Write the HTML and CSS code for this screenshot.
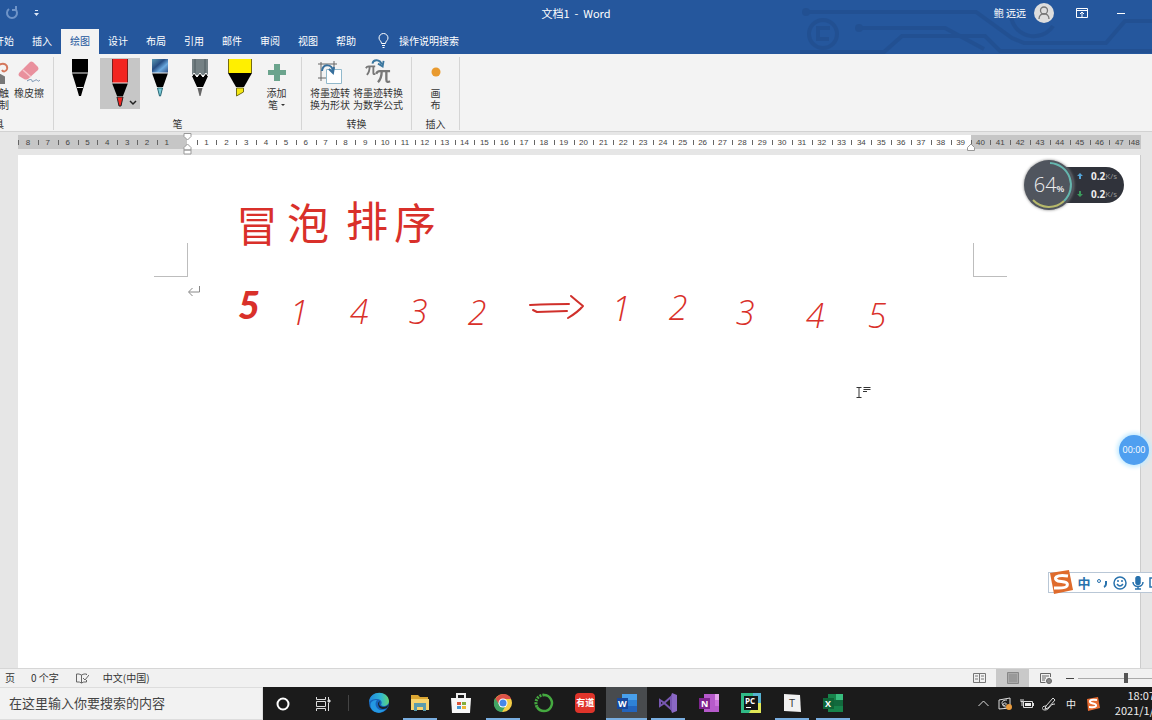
FILE: index.html
```html
<!DOCTYPE html>
<html lang="zh-CN">
<head>
<meta charset="utf-8">
<meta name="viewport" content="width=device-width, initial-scale=1">
<title>文档1 - Word</title>
<link rel="stylesheet" href="styles.css">
</head>
<body>
<header class="top">
  <svg class="circuit" width="390" height="54" viewBox="762 0 390 54" fill="none" stroke="#204b89" stroke-width="4" aria-hidden="true">
    <path d="M804 12H976L1012 38 1024 43H1106L1125 21H1152M858 28H945L984 49M800 52H884L902 36H985L1000 51H1152"/>
    <circle cx="823" cy="34" r="14"/><path d="M830 28h-12v11h11"/><path d="M1011 16a23 23 0 0 0 42 10"/><circle cx="806" cy="12" r="2"/><circle cx="859" cy="28" r="2"/>
  </svg>
  <div class="titlebar">
    <div class="quick">
      <button class="bare" aria-label="重复"><svg width="14" height="14" viewBox="0 0 14 14" fill="none" stroke="#6f94c8" stroke-width="2"><path d="M4 3a5 5 0 1 0 6 0M11 0v4H7"/></svg></button>
      <button class="bare" aria-label="自定义快速访问工具栏"><svg width="7" height="8" viewBox="0 0 7 8" fill="#dce6f5"><path d="M2 1h3v1H2zM1 4h5L3.500 7z"/></svg></button>
    </div>
    <h1 class="title">文档1&nbsp; -&nbsp; Word</h1>
    <div class="account">
      <span>鲍 远远</span>
      <svg class="avatar" width="20" height="20" viewBox="0 0 20 20" fill="none" stroke="#777" stroke-width="1.300"><circle cx="10" cy="10" r="10" fill="#dedede" stroke="none"/><circle cx="10" cy="7.500" r="3.500"/><path d="M5 16c0-7 10-7 10 0"/></svg>
      <button class="bare" aria-label="功能区显示选项"><svg width="12" height="10" viewBox="0 0 12 10" fill="none" stroke="#fff"><path d="M.5.500h11v9H.5zM.5 2.500h11M6 9V4M4 6l2-2 2 2"/></svg></button>
      <button class="bare minimise" aria-label="最小化"><svg width="10" height="10" viewBox="0 0 10 10" stroke="#fff"><path d="M1 5.500h8"/></svg></button>
    </div>
  </div>
  <nav class="tabs">
    <button>开始</button><button>插入</button><button class="active">绘图</button><button>设计</button><button>布局</button><button>引用</button><button>邮件</button><button>审阅</button><button>视图</button><button>帮助</button>
    <button class="tell"><svg width="11" height="15" viewBox="0 0 11 15" fill="none" stroke="#fff"><path d="M3.500 10.500C3.500 8 1 7.500 1 5a4.500 4.500 0 0 1 9 0c0 2.500-2.500 3-2.500 5.500zM4 12.500h3M4.500 14.500h2"/></svg>操作说明搜索</button>
  </nav>
</header>

<section class="ribbon" aria-label="绘图">
  <div class="group tools">
    <div class="items">
      <button class="tool touch"><svg width="22" height="26" viewBox="0 0 22 26" fill="none" stroke-width="2"><path d="M12 6c5-3 9 0 8 4-1 3-4 3-5 1" stroke="#d4775c"/><path d="M13 16l4 2v6h-4z" fill="#777" stroke="#777"/></svg><span>触<br>制</span></button>
      <button class="tool"><svg width="26" height="26" viewBox="0 0 26 26"><path d="M3 14 14 3q1-1 3 0l5 5q1 2 0 3L12 20q-2 1-4 0l-5-3q-1-1 0-3z" fill="#e9909d"/><path d="M7 11l8 7" stroke="#f7c4cb" stroke-width="1.500"/><path d="M11 22c3-2 5-2 5 0s4-2 5-1 1 2 3 0" fill="none" stroke="#708eae"/></svg><span>橡皮擦</span></button>
    </div>
    <span class="caption">具</span>
  </div>
  <div class="group pens">
    <div class="items">
      <button class="pen" aria-label="黑色笔"><svg width="40" height="51" viewBox="0 0 40 51"><path d="M12 1h16v14l-5 16-2 7h-2l-2-7-5-16z"/><path d="M12 15h16M17 29.500h6" stroke="#e8e8e8"/></svg></button>
      <button class="pen selected" aria-label="红色笔"><svg width="40" height="51" viewBox="0 0 40 51"><path d="M12 1h16v24H12z" fill="#f32420"/><path d="M12.500 1v24M27.500 1v24" stroke="#7d1d1d"/><path d="M12 25h16l-5 13h-6z"/><path d="M17 39h6l-2 9h-2z" fill="#f32420" stroke="#222"/><path d="M12 25h16" stroke="#eee"/><path d="m30 43 3 3 3-3" fill="none" stroke="#222" stroke-width="1.500"/></svg></button>
      <button class="pen" aria-label="银河笔"><svg width="40" height="51" viewBox="0 0 40 51"><defs><linearGradient id="galaxy" x2="1" y2="1"><stop stop-color="#5b9ab4"/><stop offset=".4" stop-color="#254c82"/><stop offset=".65" stop-color="#6aa9df"/><stop offset="1" stop-color="#314d80"/></linearGradient></defs><path d="M12 1h16v14H12z" fill="url(#galaxy)"/><path d="M12 15h16l-5 14h-6z"/><path d="M12 15h16" stroke="#eee"/><path d="M17.500 30h5l-2 8h-1z" fill="#7acbd8" stroke="#286674"/></svg></button>
      <button class="pen" aria-label="铅笔"><svg width="40" height="51" viewBox="0 0 40 51"><path d="M12 1h16v16H12z" fill="#758184"/><path d="M15 1v14M25 1v14" stroke="#515c60"/><path d="m12 18 2-3 3 4 3-4 3 4 3-4 2 3-5 11h-6z"/><path d="m12 18 2-3 3 4 3-4 3 4 3-4 2 3" fill="none" stroke="#fff"/><path d="M17.500 30h5l-2 8h-1z" fill="#666"/></svg></button>
      <button class="pen" aria-label="荧光笔"><svg width="40" height="51" viewBox="0 0 40 51"><path d="M8 1h24v14H8z" fill="#ffef00"/><path d="M8.500 1v14M31.500 1v14" stroke="#766d10"/><path d="M8 15h24L24 29h-8z"/><path d="M16.500 30h7v4l-7 4z" fill="#f4e611" stroke="#716d18"/></svg></button>
      <button class="tool add"><svg width="26" height="26" viewBox="0 0 26 26"><path d="M10 5h6v6h6v5h-6v6h-6v-6H4v-5h6z" fill="#6ba48d"/></svg><span>添加<br>笔<svg class="caret" width="4" height="3" viewBox="0 0 4 3"><path d="M0 0h4L2 2z" fill="#333"/></svg></span></button>
    </div>
    <span class="caption">笔</span>
  </div>
  <div class="group convert">
    <div class="items">
      <button class="tool"><svg width="26" height="26" viewBox="0 0 26 26" fill="none"><path d="M4 3v19M1 5h19M17 2v8M1 19h8" stroke="#666"/><path d="M9.500 10.500h15v14h-15z" fill="#fff" stroke="#91b9cc"/><path d="M5 12c1-8 10-7 11 0M12 10l4 4 1-6" stroke="#376f9c" stroke-width="2"/></svg><span>将墨迹转<br>换为形状</span></button>
      <button class="tool"><svg width="28" height="28" viewBox="0 0 28 28" fill="none" stroke="#777" stroke-width="2"><path d="M1 10q1-2 3-2h7M5 8q0 6-3 9M9 8v7q0 2 2 1"/><path d="M12 16q1-3 4-3h11M18 13q0 8-4 12M23 13v9q0 4 4 2" stroke-width="2.500"/><path d="M8 5c1-5 8-5 10 1M14 5l5 3 1-6" stroke="#3b779f"/></svg><span>将墨迹转换<br>为数学公式</span></button>
    </div>
    <span class="caption">转换</span>
  </div>
  <div class="group insert">
    <div class="items"><button class="tool"><svg width="26" height="26" viewBox="0 0 26 26"><circle cx="13" cy="13" r="4.500" fill="#e99a2e"/></svg><span>画<br>布</span></button></div>
    <span class="caption">插入</span>
  </div>
</section>

<main class="workspace">
  <div class="ruler" aria-label="标尺">
    <i class="out">8</i><i class="out">7</i><i class="out">6</i><i class="out">5</i><i class="out">4</i><i class="out">3</i><i class="out">2</i><i class="out">1</i><i class="zero"><svg class="indent" width="9" height="22" viewBox="0 0 9 22" fill="#fff" stroke="#999"><path d="M1 .5h7v3L4.500 7 1 3.500zM4.500 11 8 14.500V17H1v-2.500zM1 17h7v4H1z"/></svg></i><i>1</i><i>2</i><i>3</i><i>4</i><i>5</i><i>6</i><i>7</i><i>8</i><i>9</i><i>10</i><i>11</i><i>12</i><i>13</i><i>14</i><i>15</i><i>16</i><i>17</i><i>18</i><i>19</i><i>20</i><i>21</i><i>22</i><i>23</i><i>24</i><i>25</i><i>26</i><i>27</i><i>28</i><i>29</i><i>30</i><i>31</i><i>32</i><i>33</i><i>34</i><i>35</i><i>36</i><i>37</i><i>38</i><i>39</i><i class="out first">40<svg class="right-indent" width="8" height="8" viewBox="0 0 8 8" fill="#fff" stroke="#999"><path d="M4 1 7.500 4.500v3h-7v-3z"/></svg></i><i class="out">41</i><i class="out">42</i><i class="out">43</i><i class="out">44</i><i class="out">45</i><i class="out">46</i><i class="out">47</i><i class="out last">48</i>
  </div>
  <article class="page">
    <svg class="sheet" viewBox="18 155 1122 513" fill="none">
      <path d="M187.500 243v34M154 276.500h34M973.500 243v34M973 276.500h34" stroke="#bdbdbd"/>
      <path d="M199.500 286v6H189M192.500 288l-4 4 4 4" stroke="#888"/>
      <g class="ink heading"><text x="236" y="242">冒</text><text x="287" y="239">泡</text><text x="346" y="237">排</text><text x="394" y="239">序</text></g>
      <g class="ink number">
        <text class="heavy" x="249" y="319">5</text><text x="299" y="325">1</text><text x="359" y="324">4</text><text x="418" y="324">3</text><text x="477" y="325">2</text>
        <text x="621" y="321">1</text><text x="678" y="320">2</text><text x="745" y="325">3</text><text x="815" y="328">4</text><text x="877" y="328">5</text>
      </g>
      <path d="M530 305q22-1 39-1M533 310l4 2 30-1M571 296q7 6 12 10-5 6-15 12" stroke="#d0302b" stroke-width="2" stroke-linecap="round" stroke-linejoin="round"/>
      <path d="M856.500 387.500h5M856.500 397.500h5M859 388v9M863.500 387.500h7M863.500 389.500h7M863 391.500h4" stroke="#333"/>
    </svg>
  </article>
</main>

<footer class="status">
  <span>页</span><span class="words">0 个字</span>
  <svg width="13" height="11" viewBox="0 0 13 11" fill="none" stroke="#666"><path d="M5.500 2Q3 .500.500 1v8q3-.5 5 1zM5.500 2Q8 .500 10.500 1v1M5.500 10q2-1.500 5-1V7M7 5l2 2 4-5"/></svg>
  <span class="language">中文(中国)</span>
  <div class="views">
    <button class="view" aria-label="阅读视图"><svg width="13" height="10" viewBox="0 0 13 10" fill="none" stroke="#777"><path d="M.5.500h12v9H.5zM6.500 0v10M2 3h3M2 6h3M8 3h3M8 6h3"/></svg></button>
    <button class="view on" aria-label="页面视图"><svg width="12" height="12" viewBox="0 0 12 12" fill="#aaa" stroke="#888"><path d="M.5.500h11v11H.5zM2 3h8M2 5h8M2 7h8M2 9h8"/></svg></button>
    <button class="view" aria-label="Web 版式视图"><svg width="12" height="11" viewBox="0 0 12 11" fill="none" stroke="#666"><path d="M10.500 4V.500H.5v9h5M2 3h7M2 5h4M2 7h3"/><circle cx="9" cy="8" r="2.500" fill="#888"/></svg></button>
  </div>
  <button class="bare minus" aria-label="缩小"><svg width="8" height="8" viewBox="0 0 8 8" stroke="#444"><path d="M0 4.500h8"/></svg></button>
  <input class="zoom" type="range" aria-label="显示比例" value="50">
</footer>

<div class="taskbar">
  <input class="search" type="text" aria-label="搜索" placeholder="在这里输入你要搜索的内容">
  <button class="sys" aria-label="Cortana"><svg width="14" height="14" viewBox="0 0 14 14" fill="none" stroke="#fff" stroke-width="2"><circle cx="7" cy="7" r="5.500"/></svg></button>
  <button class="sys" aria-label="任务视图"><svg width="15" height="14" viewBox="0 0 15 14" fill="none" stroke="#ddd"><path d="M.5 0v2.500h9V0M.5 4.500h9v5H.5zM.5 14v-2.500h9V14M12.500 0v3M12.500 6v8"/><path d="M12 3h2v2h-2z" fill="#ddd"/></svg></button>
  <span class="rule"></span>
  <nav class="apps" aria-label="应用">
    <button aria-label="Edge"><svg width="22" height="22" viewBox="0 0 22 22"><defs><linearGradient id="sea" x2="1"><stop stop-color="#2085dd"/><stop offset=".6" stop-color="#30b7d2"/><stop offset="1" stop-color="#62d572"/></linearGradient></defs><circle cx="11" cy="11" r="10" fill="#1763ba"/><path d="M1 10C2-2 20-2 21 9c0 5-6 6-8 4 2-4-1-6-4-6-4 0-7 1-8 4z" fill="url(#sea)"/><path d="M9 8c-4 5 1 13 9 9-5 6-13 4-15-1-2-6 2-8 6-8z" fill="#2498e2"/><path d="M12 9q-3 5 3 6 4 0 6-3l-2 4q-8 3-9-4 0-2 2-3z" fill="#19212a"/></svg></button>
    <button class="open" aria-label="文件资源管理器"><svg width="20" height="18" viewBox="0 0 20 18"><path d="M1 1h7l2 2h8v4H1z" fill="#dca632"/><path d="M1 5h18v11H1z" fill="#f6d46e"/><path d="M4 9h12v8h-3v-4H7v4H4z" fill="#5a9cac"/></svg></button>
    <button aria-label="Microsoft Store"><svg width="20" height="20" viewBox="0 0 20 20"><path d="M6 6V1h8v5" fill="none" stroke="#eee" stroke-width="2"/><path d="M0 5h20l-1 15H1z" fill="#f7f7f7"/><path d="M6 9h4v3H6z" fill="#dc5437"/><path d="M11 9h4v3h-4z" fill="#84ad3a"/><path d="M6 13h4v3H6z" fill="#4699d4"/><path d="M11 13h4v3h-4z" fill="#eeb737"/></svg></button>
    <button class="open" aria-label="Chrome"><svg width="20" height="20" viewBox="0 0 20 20"><circle cx="10" cy="10" r="9" fill="#f4cd46"/><path d="M10 10H1L3 5C8-2 17 1 18 6h-8z" fill="#dc5248"/><path d="M2 5l5 8 5 1-3 5C2 19-1 11 2 5z" fill="#41a564"/><circle cx="10" cy="10" r="4.500" fill="#fff"/><circle cx="10" cy="10" r="3.500" fill="#4687e8"/></svg></button>
    <button aria-label="Anaconda"><svg width="20" height="20" viewBox="0 0 20 20" fill="none" stroke="#45a940"><path d="M10 2a8 8 0 1 1-7 12" stroke-width="2.500"/><path d="M3 14a8 8 0 0 1 7-12" stroke-width="3" stroke-dasharray="2 1"/></svg></button>
    <button aria-label="有道"><span class="youdao">有道</span></button>
    <button class="open current" aria-label="Word"><svg width="20" height="20" viewBox="0 0 20 20"><path d="M5 1h15v18H5z" fill="#2364bd"/><path d="M5 1h15v6H5z" fill="#48a0ec"/><path d="M5 7h15v6H5z" fill="#2e82d7"/><path d="M0 5h11v11H0z" fill="#17489d"/><text x="1" y="14">W</text></svg></button>
    <button class="open" aria-label="Visual Studio"><svg width="20" height="20" viewBox="0 0 20 20"><path d="m14 0 5 2v16l-5 2-1-3V3z" fill="#8a68c4"/><path d="M2 7v6l3-2 8-7v12l-8-7z" fill="none" stroke="#7857b2" stroke-width="2"/></svg></button>
    <button aria-label="OneNote"><svg width="20" height="20" viewBox="0 0 20 20"><path d="M5 1h15v18H5z" fill="#b65acb"/><path d="M16 1h4v6h-4z" fill="#e4a3ec"/><path d="M16 7h4v6h-4z" fill="#cb73dc"/><path d="M0 5h11v11H0z" fill="#7f258f"/><text x="2" y="14">N</text></svg></button>
    <button aria-label="PyCharm"><svg width="20" height="20" viewBox="0 0 20 20"><path d="M0 0h14l6 5v15H0z" fill="#30ba86"/><path d="M12 0h8v13H12z" fill="#56b2d1"/><path d="M14 10h6v10H8z" fill="#e1e857"/><path d="M3 3h14v14H3z" fill="#151515"/><path d="M5 14.500h5" stroke="#fff"/><text class="small" x="4" y="11">PC</text></svg></button>
    <button class="open" aria-label="Typora"><svg width="20" height="20" viewBox="0 0 20 20"><path d="m2 1 16 1 1 17-17-1z" fill="#f1f1f1"/><text class="dark" x="7" y="14">T</text></svg></button>
    <button class="open" aria-label="Excel"><svg width="20" height="20" viewBox="0 0 20 20"><path d="M5 1h15v18H5z" fill="#17834b"/><path d="M13 1h7v6h-7z" fill="#38bd7e"/><path d="M5 7h15v6H5z" fill="#12693d"/><path d="M0 5h11v11H0z" fill="#0f6537"/><text x="2" y="14">X</text></svg></button>
  </nav>
  <div class="tray">
    <button aria-label="显示隐藏的图标"><svg width="11" height="7" viewBox="0 0 11 7" fill="none" stroke="#ddd"><path d="m.5 6 5-5 5 5"/></svg></button>
    <button aria-label="同步"><svg width="15" height="14" viewBox="0 0 15 14" fill="none" stroke="#ddd"><path d="m1 3 11-2v10L1 12zM9 3C4 3 3 6 5 8s5-2 2-2-3 4 1 4"/><circle cx="11" cy="10" r="3" fill="#e99b3d" stroke="none"/></svg></button>
    <button aria-label="电池"><svg width="14" height="10" viewBox="0 0 14 10" fill="none" stroke="#ddd"><path d="M3.500 2.500h9v6h-9z"/><path d="M5 4h6v3H5z" fill="#eee" stroke="none"/><path d="M13.500 4v3M.5 2.500h3M1 0v2M3 0v2M2 3v4"/></svg></button>
    <button aria-label="触控笔"><svg width="14" height="14" viewBox="0 0 14 14" fill="none" stroke="#ddd"><path d="M4 9 11 1l2 2-7 8-3 1zM4 9c-5 0-5 4-1 4 5 0 4-6 10-6"/></svg></button>
    <button>中</button>
    <button aria-label="搜狗输入法"><svg width="14" height="14" viewBox="0 0 14 14"><path d="m1 2 11-2 2 11-12 3z" fill="#e66c32"/><path d="M11 3Q3 2 4 5c1 2 7 1 6 4-1 2-4 1-7 1" fill="none" stroke="#fff" stroke-width="2"/></svg></button>
    <div class="clock"><time>18:07</time><span>2021/1/</span></div>
  </div>
</div>

<aside class="meter">
  <div class="dial"><svg class="arc" width="50" height="50" viewBox="0 0 50 50" fill="none" stroke-width="2"><path d="M26 3a22 22 0 0 1 14 38" stroke="#65b6ae"/><path d="M40 41a22 22 0 0 1-31-1" stroke="#b7b96b"/></svg><b>64<small>%</small></b></div>
  <div class="rates"><span><svg width="6" height="6" viewBox="0 0 6 6" fill="#54a5d8"><path d="M3 0l3 3H4v3H2V3H0z"/></svg><b>0.2</b><small>K/s</small></span><span><svg width="6" height="6" viewBox="0 0 6 6" fill="#3b9a5c"><path d="M3 6 0 3h2V0h2v3h2z"/></svg><b>0.2</b><small>K/s</small></span></div>
</aside>
<div class="timer">00:00</div>
<aside class="ime">
  <svg class="sogou" width="25" height="25" viewBox="0 0 25 25"><path d="m1 3 19-3 4 20-19 4z" fill="#df6b2c"/><path d="M19 6C6 4 4 9 9 11c4 1 11 0 9 5-2 3-8 2-13 2" fill="none" stroke="#fff" stroke-width="3"/></svg>
  <button>中</button>
  <button aria-label="标点"><svg width="12" height="12" viewBox="0 0 12 12" fill="none" stroke="#2872ad"><circle cx="3" cy="4" r="1.500"/><path d="M9 5h1v2q0 2-2 3" stroke-width="2"/></svg></button>
  <button aria-label="表情"><svg width="14" height="14" viewBox="0 0 14 14" fill="none" stroke="#2872ad" stroke-width="1.500"><circle cx="7" cy="7" r="6"/><path d="M5 4v2M9 4v2M4 8q3 4 6 0"/></svg></button>
  <button aria-label="语音"><svg width="12" height="14" viewBox="0 0 12 14" fill="none" stroke="#2872ad" stroke-width="1.500"><path d="M4 2q2-3 4 0v5q-2 3-4 0z" fill="#2872ad"/><path d="M1 6c0 6 10 6 10 0M6 10v3M3 13h6"/></svg></button>
  <button aria-label="键盘"><svg width="14" height="11" viewBox="0 0 14 11" fill="none" stroke="#2872ad" stroke-width="1.500"><path d="M1 1h12v9H1zM3 4h8M3 7h8"/></svg></button>
</aside>
</body>
</html>
```
FILE: styles.css
```css
* { box-sizing: border-box; }
body {
  margin: 0;
  height: 100vh;
  display: flex;
  flex-direction: column;
  overflow: hidden;
  position: relative;
  background: #e6e6e6;
  color: #333;
  font: 10px/12px "Noto Sans CJK SC", sans-serif;
}
button {
  display: flex;
  align-items: center;
  justify-content: center;
  margin: 0;
  padding: 0;
  border: 0;
  background: none;
  color: inherit;
  font: inherit;
}
svg { display: block; flex-shrink: 0; }

/* Title bar and tabs */
.top { position: relative; flex: none; background: #25579d; color: #fff; }
.circuit { position: absolute; top: 0; right: 0; opacity: .5; }
.titlebar {
  position: relative;
  display: grid;
  grid-template-columns: 1fr auto 1fr;
  align-items: center;
  height: 26px;
}
.quick { display: flex; align-items: center; gap: 14px; padding-left: 5px; }
.title { margin: 0; font-size: 11px; line-height: 16px; font-weight: 400; }
.account { display: flex; align-items: center; justify-content: flex-end; padding-right: 26px; }
.avatar { margin: 0 22px 0 8px; }
.minimise { margin-left: 28px; }
.tabs { position: relative; display: flex; height: 28px; margin-left: -15px; padding-top: 3px; }
.tabs button { width: 38px; padding-bottom: 2px; white-space: nowrap; }
.tabs .active { background: #f3f3f3; color: #25579d; }
.tabs .tell { width: auto; gap: 10px; margin-left: 13px; }

/* Ribbon */
.ribbon {
  display: flex;
  flex: none;
  height: 78px;
  padding: 3px 0 1px;
  background: #f3f3f3;
  border-bottom: 1px solid #d2d2d2;
}
.group {
  display: flex;
  flex-direction: column;
  align-items: center;
  justify-content: space-between;
  border-right: 1px solid #d5d5d5;
}
.items { display: flex; align-items: flex-start; }
.tool { flex-direction: column; gap: 2px; padding-top: 2px; line-height: 12px; white-space: nowrap; }
.tools { width: 69px; margin-left: -15px; align-items: flex-start; }
.tools .items { gap: 5px; }
.touch { width: 24px; align-items: flex-end; }
.tools .caption { padding-left: 9px; }
.pens { width: 248px; }
.pens .items { margin-right: 2px; }
.pen { width: 40px; height: 51px; margin-top: 1px; }
.selected { background: #c6c6c6; }
.add { width: 34px; }
.caret { display: inline-block; margin: 0 0 2px 3px; }
.convert { width: 110px; }
.convert .items { gap: 3px; }
.convert .tool svg { height: 26px; }
.insert { width: 48px; }

/* Ruler and page */
.workspace { flex: 1; min-height: 0; display: flex; flex-direction: column; padding: 3px 11px 0 18px; }
.ruler { display: flex; flex: none; height: 14px; margin-bottom: 6px; background: #fff; }
.ruler i {
  position: relative;
  flex: 1 1 0;
  min-width: 0;
  background: linear-gradient(#666, #666) 0 5px / 1px 5px no-repeat;
  color: #444;
  font: 8px/16px "Liberation Sans", sans-serif;
  text-align: center;
}
.ruler .out { background-color: #c6c6c6; }
.ruler .zero { background: linear-gradient(90deg, #c6c6c6 50%, #fff 50%); }
.ruler .last { flex-grow: .6; }
.indent { position: absolute; left: 6px; top: -2px; z-index: 1; }
.right-indent { position: absolute; left: -4px; bottom: -2px; }
.page { flex: 1; min-height: 0; overflow: hidden; background: #fff; border-right: 1px solid #ccc; }
.sheet { width: 100%; height: auto; }
.ink { fill: #d9302a; text-anchor: middle; }
.heading { font-size: 42px; text-anchor: start; }
.number { font: italic 300 34px "Open Sans", sans-serif; }
.heavy { font: italic 900 38px Lato, sans-serif; }

/* Status bar */
.status {
  display: flex;
  align-items: center;
  flex: none;
  height: 19px;
  padding-left: 5px;
  overflow: hidden;
  background: #f1f1f1;
  border-top: 1px solid #d6d6d6;
}
.words { margin: 0 17px 0 16px; }
.language { margin-left: 14px; }
.views { display: flex; align-self: stretch; margin-left: auto; }
.view { width: 33px; }
.on { background: #c9c9c9; }
.minus { margin: 0 4px; }
.zoom { appearance: none; width: 96px; height: 12px; margin: 0 -22px 0 0; background: linear-gradient(#aaa, #aaa) 0 6px / 100% 1px no-repeat; }
.zoom::-webkit-slider-thumb { appearance: none; width: 4px; height: 10px; background: #555; }

/* Task bar */
.taskbar { display: flex; flex: none; height: 33px; overflow: hidden; background: #1b1b1b; color: #eee; }
.search { width: 263px; padding: 0 9px 2px; border: 1px solid #ddd; border-left: 0; background: #f2f2f2; color: #444; font: 13px/20px "Noto Sans CJK SC", sans-serif; }
.search::placeholder { color: #444; opacity: 1; }
.sys { width: 40px; }
.rule { width: 1px; height: 16px; margin: 8px 9px 0 5px; background: #444; }
.apps { display: grid; grid-template-columns: repeat(12, 1fr); width: 496px; }
.apps button { border-bottom: 2px solid transparent; }
.apps .open { background: linear-gradient(#79aee0, #79aee0) 50% 100% / 34px 2px no-repeat border-box; }
.apps .current { background-color: #484b4e; background-size: 100% 2px; }
.apps text { fill: #fff; font: 700 9px "Open Sans", sans-serif; }
.apps .small { font-size: 8px; }
.apps .dark { fill: #333; font-weight: 400; font-size: 11px; }
.youdao { width: 20px; padding: 4px 0; border-radius: 4px; background: #df342a; color: #fff; font-size: 9px; font-weight: 700; }
.tray { display: flex; margin-left: auto; }
.tray button { width: 22px; }
.clock { display: flex; flex-direction: column; align-items: flex-end; width: 48px; margin-left: 8px; padding-top: 1px; line-height: 15px; margin-right: -8px; font-size: 11px; }
.clock span { padding-right: 6px; }
.clock time { padding-right: 5px; }

/* Floating widgets */
.meter { position: absolute; top: 160px; right: 28px; display: flex; align-items: center; }
.dial { position: relative; z-index: 1; width: 50px; height: 50px; border-radius: 50%; background: #50555e; color: #eee; text-align: center; box-shadow: 0 0 3px #777; font: 20px/50px "Open Sans", sans-serif; }
.dial b { font-weight: 300; }
.dial small { font-size: 9px; font-weight: 600; }
.arc { position: absolute; inset: 0; }
.rates { display: flex; flex-direction: column; justify-content: space-around; height: 36px; margin-left: -12px; padding: 0 7px 0 15px; border-radius: 0 18px 18px 0; background: #30333b; color: #eee; font: 10px/14px "Open Sans", sans-serif; }
.rates span { display: flex; align-items: center; }
.rates b { margin-left: 8px; }
.rates small { font-size: 8px; color: #999; }
.timer { position: absolute; right: 3px; top: 435px; width: 30px; height: 30px; border-radius: 50%; background: #4f9ff0; color: #fff; box-shadow: 0 0 4px 2px #c2eaff; font: 9px/30px "Open Sans", sans-serif; text-align: center; }
.ime { position: absolute; right: -14px; top: 572px; display: flex; align-items: center; height: 21px; background: #fff; border: 1px solid #b9c7d6; color: #2872ad; font-weight: 700; font-size: 13px; }
.ime button { width: 18px; }
.sogou { margin-right: 1px; }
```
